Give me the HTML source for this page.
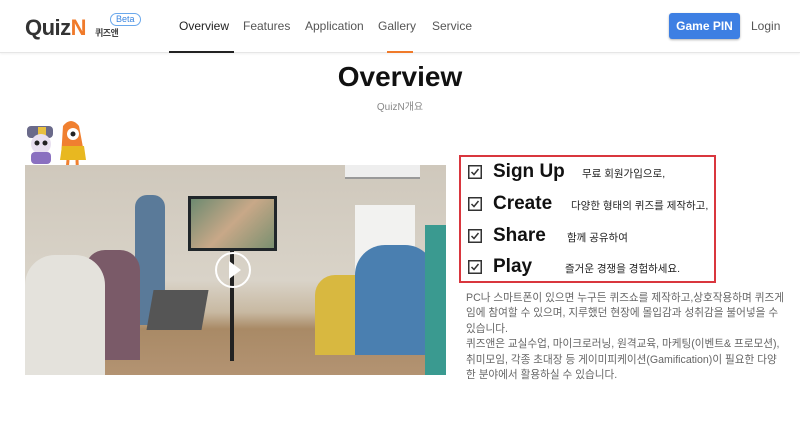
<!DOCTYPE html>
<html><head><meta charset="utf-8"><style>
*{margin:0;padding:0;box-sizing:border-box}
body{width:800px;height:447px;background:#fff;font-family:"Liberation Sans","Noto Sans CJK KR",sans-serif;position:relative;overflow:hidden;color:#333}
.hdr{position:absolute;left:0;top:0;width:800px;height:53px;border-bottom:1px solid #e6e6e6;box-shadow:0 1px 2px rgba(0,0,0,.06)}
.logo{position:absolute;left:25px;top:15px;font-weight:bold;font-size:22px;color:#333;letter-spacing:-0.5px}
.logo .n{color:#f07a2a}
.logo .k{position:absolute;left:70px;top:11px;font-size:9px;color:#444;white-space:nowrap}
.beta{position:absolute;left:110px;top:13px;border:1px solid #6aa8ec;border-radius:8px;font-size:9px;color:#3b86e0;padding:0 5px;line-height:11px}
.nav a{position:absolute;top:19px;font-size:12px;color:#555;text-decoration:none}
.ul{position:absolute;top:51px;height:2px}
.btn{position:absolute;left:669px;top:13px;width:71px;height:26px;background:#3d7fe3;border-radius:3px;color:#fff;font-size:12px;font-weight:bold;text-align:center;line-height:26px;box-shadow:0 1px 2px rgba(0,0,0,.3)}
h1{position:absolute;left:0;width:800px;top:61px;text-align:center;font-size:28px;font-weight:bold;color:#111}
.sub{position:absolute;left:0;width:800px;top:98px;text-align:center;font-size:10px;color:#888}
.photo{position:absolute;left:25px;top:165px;width:421px;height:210px;overflow:hidden;background:linear-gradient(#cfc8bc,#d9d3c8 55%,#c8b9a2 70%,#a98a66 78%,#b39372 100%)}
.box{position:absolute;left:459px;top:155px;width:257px;height:128px;border:2px solid #d9363e}
.row{position:absolute;left:7px;height:24px;white-space:nowrap}
.cb{position:absolute;left:0;top:4px;width:14px;height:14px}
.row b{position:absolute;left:25px;top:0;font-size:19px;font-family:"Liberation Sans",sans-serif;font-weight:bold;color:#111}
.row span{position:absolute;top:5px;font-size:10.5px;color:#222}
.txt{position:absolute;left:466px;top:291px;width:318px;font-size:10.6px;line-height:15.4px;color:#666;word-break:break-all}
</style></head><body>
<div class="hdr">
 <div class="logo">Quiz<span class="n">N</span><span class="k">퀴즈앤</span></div>
 <div class="beta">Beta</div>
 <div class="nav">
  <a style="left:179px;color:#222">Overview</a>
  <a style="left:243px">Features</a>
  <a style="left:305px">Application</a>
  <a style="left:378px">Gallery</a>
  <a style="left:432px">Service</a>
  <a style="left:751px">Login</a>
 </div>
 <div class="ul" style="left:169px;width:65px;background:#222"></div>
 <div class="ul" style="left:387px;width:26px;background:#f07a2a"></div>
 <div class="btn">Game PIN</div>
</div>
<h1>Overview</h1>
<div class="sub">QuizN개요</div>
<svg style="position:absolute;left:25px;top:118px" width="65" height="72">
 <rect x="2" y="8" width="26" height="12" rx="4" fill="#6a6a8a"/>
 <rect x="13" y="9" width="8" height="8" fill="#e8c040"/>
 <circle cx="16" cy="26" r="10" fill="#e8e0f0"/>
 <circle cx="12" cy="25" r="2.5" fill="#222"/><circle cx="20" cy="25" r="2.5" fill="#222"/>
 <rect x="6" y="34" width="20" height="12" rx="4" fill="#8a70c0"/>
 <path d="M38 8 Q46 -2 54 8 L60 40 Q50 44 36 40 Z" fill="#f08030"/>
 <circle cx="48" cy="16" r="6" fill="#fff"/><circle cx="48" cy="16" r="2.5" fill="#222"/>
 <path d="M37 28 L59 28 L61 42 L35 42Z" fill="#e8b820"/>
 <path d="M43 42 L41 64 M52 42 L53 64" stroke="#f08030" stroke-width="3"/>
</svg>
<div class="photo">
 <div style="position:absolute;left:320px;top:0;width:75px;height:14px;background:#eeeeee;border-bottom:2px solid #999"></div>
 <div style="position:absolute;left:163px;top:31px;width:89px;height:55px;background:#20262a;padding:3px"><div style="width:100%;height:100%;background:linear-gradient(135deg,#6d8a70,#c8a888 50%,#7a9070)"></div></div>
 <div style="position:absolute;left:205px;top:86px;width:4px;height:110px;background:#222"></div>
 <div style="position:absolute;left:330px;top:40px;width:60px;height:70px;background:#f2f2f0"></div>
 <div style="position:absolute;left:110px;top:30px;width:30px;height:130px;background:#5a7a99;border-radius:12px 12px 0 0"></div>
 <div style="position:absolute;left:60px;top:85px;width:55px;height:110px;background:#7a5a68;border-radius:20px 20px 0 0"></div>
 <div style="position:absolute;left:0;top:90px;width:80px;height:120px;background:#e4e2dc;border-radius:30px 30px 0 0"></div>
 <div style="position:absolute;left:290px;top:110px;width:60px;height:80px;background:#d8b840;border-radius:20px 20px 0 0"></div>
 <div style="position:absolute;left:330px;top:80px;width:80px;height:110px;background:#4a7fb0;border-radius:30px 30px 0 0"></div>
 <div style="position:absolute;left:400px;top:60px;width:30px;height:150px;background:#3a9a90"></div>
 <div style="position:absolute;left:125px;top:125px;width:55px;height:40px;background:#555;transform:skewX(-10deg)"></div>
 <div style="position:absolute;left:190px;top:87px;width:36px;height:36px;border:2px solid #fff;border-radius:50%"></div>
 <div style="position:absolute;left:204px;top:96px;width:0;height:0;border-left:12px solid #fff;border-top:9px solid transparent;border-bottom:9px solid transparent"></div>
</div>
<div class="box">
 <div class="row" style="top:4px"><svg class="cb" viewBox="0 0 14 14"><rect x="0.75" y="0.75" width="12.5" height="12.5" fill="none" stroke="#333" stroke-width="1.5"/><path d="M3.5 7 L6 9.5 L10.5 4" fill="none" stroke="#333" stroke-width="1.5"/></svg><b>Sign Up</b><span style="left:114px">무료 회원가입으로,</span></div>
 <div class="row" style="top:36px"><svg class="cb" viewBox="0 0 14 14"><rect x="0.75" y="0.75" width="12.5" height="12.5" fill="none" stroke="#333" stroke-width="1.5"/><path d="M3.5 7 L6 9.5 L10.5 4" fill="none" stroke="#333" stroke-width="1.5"/></svg><b>Create</b><span style="left:103px">다양한 형태의 퀴즈를 제작하고,</span></div>
 <div class="row" style="top:68px"><svg class="cb" viewBox="0 0 14 14"><rect x="0.75" y="0.75" width="12.5" height="12.5" fill="none" stroke="#333" stroke-width="1.5"/><path d="M3.5 7 L6 9.5 L10.5 4" fill="none" stroke="#333" stroke-width="1.5"/></svg><b>Share</b><span style="left:99px">함께 공유하여</span></div>
 <div class="row" style="top:99px"><svg class="cb" viewBox="0 0 14 14"><rect x="0.75" y="0.75" width="12.5" height="12.5" fill="none" stroke="#333" stroke-width="1.5"/><path d="M3.5 7 L6 9.5 L10.5 4" fill="none" stroke="#333" stroke-width="1.5"/></svg><b>Play</b><span style="left:97px">즐거운 경쟁을 경험하세요.</span></div>
</div>
<div class="txt">PC나 스마트폰이 있으면 누구든 퀴즈쇼를 제작하고,상호작용하며 퀴즈게임에 참여할 수 있으며, 지루했던 현장에 몰입감과 성취감을 불어넣을 수 있습니다.<br>퀴즈앤은 교실수업, 마이크로러닝, 원격교육, 마케팅(이벤트&amp; 프로모션), 취미모임, 각종 초대장 등 게이미피케이션(Gamification)이 필요한 다양한 분야에서 활용하실 수 있습니다.</div>
</body></html>
